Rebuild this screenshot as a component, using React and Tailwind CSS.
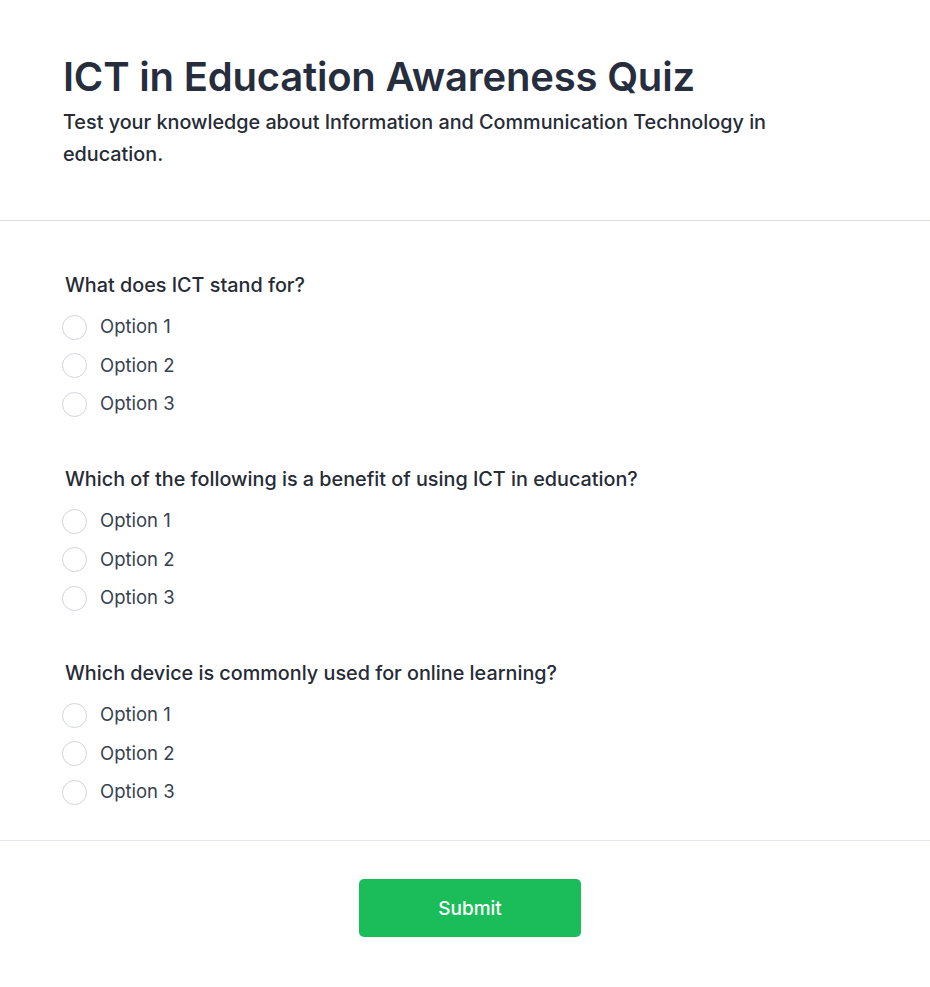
const questions = [
  "What does ICT stand for?",
  "Which of the following is a benefit of using ICT in education?",
  "Which device is commonly used for online learning?",
];

function Radio({ label }) {
  return (
    <label className="flex items-center gap-[13px] h-[38.5px] cursor-pointer">
      <span className="w-[25px] h-[25px] rounded-full border border-[#d1d5db] bg-white" />
      <span className="text-[18.5px] text-[#374151]">{label}</span>
    </label>
  );
}

export default function App() {
  return (
    <div className="min-h-[987px] bg-white text-[#1f2937]" style={{ fontFamily: "Inter, 'Noto Sans', sans-serif" }}>
      <header className="px-[63px] pt-[52px] pb-[50px] border-b border-[#d8dbe4]">
        <h1 className="text-[40px] leading-[50px] font-semibold text-[#262d3d] tracking-[-0.2px]">
          ICT in Education Awareness Quiz
        </h1>
        <p className="mt-[4px] max-w-[740px] text-[19.8px] leading-[32px] font-medium text-[#262b36]">
          Test your knowledge about Information and Communication Technology in education.
        </p>
      </header>

      <main className="px-[62px] pt-[50px] pb-[28px] flex flex-col gap-[41.5px] border-b border-[#e6e6f2]">
        {questions.map((q) => (
          <section key={q}>
            <h2 className="ml-[3px] text-[19.8px] leading-[28px] font-medium text-[#262b36] mb-[9px]">{q}</h2>
            <div className="flex flex-col">
              <Radio label="Option 1" />
              <Radio label="Option 2" />
              <Radio label="Option 3" />
            </div>
          </section>
        ))}
      </main>

      <div className="flex justify-center pt-[38px] pl-[10px]">
        <button className="w-[222px] h-[58px] pt-[3px] rounded-[5px] bg-[#1bbc5a] text-white text-[19px] font-medium">
          Submit
        </button>
      </div>
    </div>
  );
}
